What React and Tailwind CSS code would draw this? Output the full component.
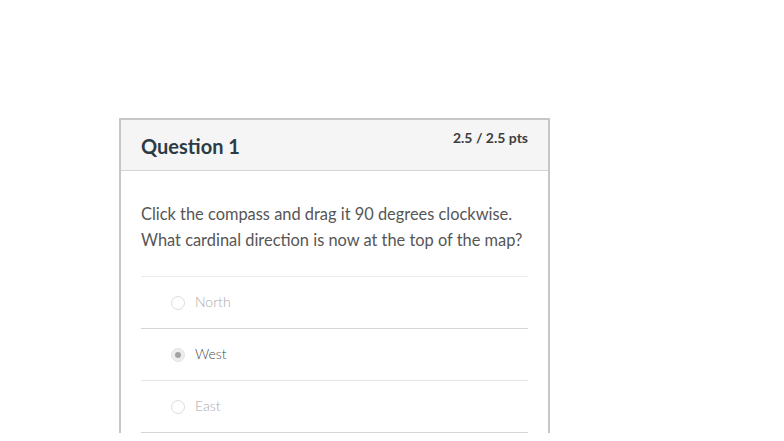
import React from "react";

const options = [
  { label: "North", selected: false },
  { label: "West", selected: true },
  { label: "East", selected: false },
];

function Radio({ selected }) {
  return selected ? (
    <span className="flex h-[14px] w-[14px] items-center justify-center rounded-full border border-[#e2e2e2] bg-[#ededed]">
      <span className="h-[6px] w-[6px] rounded-full bg-[#a3a3a3]" />
    </span>
  ) : (
    <span className="h-[14px] w-[14px] rounded-full border border-[#dcdcdc] bg-white" />
  );
}

export default function App() {
  return (
    <div
      className="h-[441px] w-[784px] overflow-hidden bg-white pl-[119px] pt-[118px]"
      style={{ fontFamily: "Lato, 'Open Sans', sans-serif" }}
    >
      <div className="w-[431px] border-2 border-b-0 border-[#c6c6c6]">
        <div className="flex h-[51px] justify-between border-b border-[#d4d4d4] bg-[#f5f5f5] pl-[20px] pr-[20px]">
          <h2 className="pt-[11px] text-[20px] font-bold leading-[30px] text-[#2d3b45]">
            Question 1
          </h2>
          <span className="pt-[9px] text-[14px] font-bold leading-[18px] text-[#3d3d3d]">
            2.5 / 2.5 pts
          </span>
        </div>
        <div className="px-[20px] pt-[30px]">
          <p className="pb-[23px] text-[16.4px] leading-[26px] text-[#565656]">
            Click the compass and drag it 90 degrees clockwise.
            <br />
            What cardinal direction is now at the top of the map?
          </p>
          <div className="border-t border-[#ececec]">
            {options.map((o) => (
              <div
                key={o.label}
                className={
                  o.selected
                    ? "flex h-[52px] items-center gap-[10px] border-b border-[#e6e6e6] pl-[30px]"
                    : "flex h-[52px] items-center gap-[10px] border-b border-[#d6d6d6] pl-[30px]"
                }
              >
                <Radio selected={o.selected} />
                <span
                  className={
                    o.selected
                      ? "pb-[3px] text-[14px] font-light text-[#4a4a4a]"
                      : "pb-[3px] text-[14px] font-light text-[#aaaaaa]"
                  }
                >
                  {o.label}
                </span>
              </div>
            ))}
          </div>
        </div>
      </div>
    </div>
  );
}
